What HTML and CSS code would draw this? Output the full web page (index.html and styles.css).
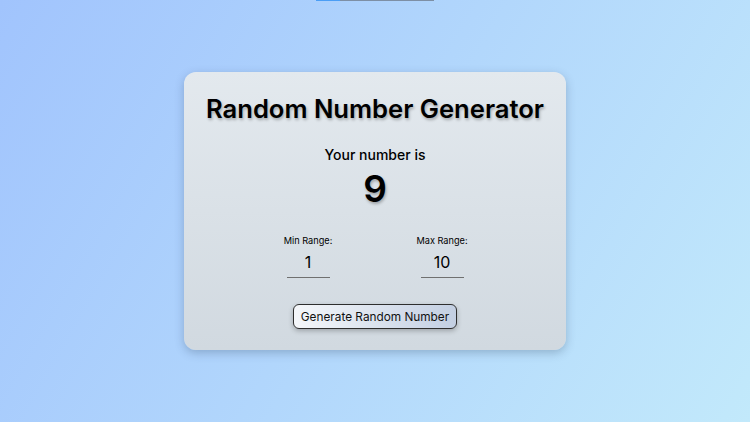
FILE: index.html
```html
<!DOCTYPE html>
<html lang="en">
<head>
<meta charset="utf-8">
<title>Random Number Generator</title>
<link rel="stylesheet" href="styles.css">
</head>
<body>
<div class="topbar"><span class="topbar-fill"></span></div>
<main class="card">
  <h1 class="title">Random Number Generator</h1>
  <p class="subtitle">Your number is</p>
  <p class="result">9</p>
  <div class="ranges">
    <label class="range">
      <span class="range-label">Min Range:</span>
      <input class="range-input" type="text" value="1">
    </label>
    <label class="range">
      <span class="range-label">Max Range:</span>
      <input class="range-input" type="text" value="10">
    </label>
  </div>
  <button class="generate" type="button">Generate Random Number</button>
</main>
</body>
</html>
```

FILE: styles.css
```css
* { box-sizing: border-box; }

html, body { height: 100%; }

body {
  margin: 0;
  background: linear-gradient(120deg, #a1c4fd 0%, #c2e9fb 100%);
  font-family: "Inter", "Noto Sans", sans-serif;
  color: #000;
  display: flex;
  align-items: center;
  justify-content: center;
}

.topbar {
  position: absolute;
  top: 0;
  left: 316px;
  width: 118px;
  height: 1px;
  background: #7d8fa5;
  display: flex;
}

.topbar-fill {
  width: 24px;
  background: #4b9ef5;
}

.card {
  width: 382px;
  padding: 20px 0 21px;
  border-radius: 12px;
  background: linear-gradient(to top, #d1d9e0 0%, #e3e9ee 100%);
  box-shadow: 0 3px 10px rgba(40, 60, 90, 0.28);
  display: flex;
  flex-direction: column;
  align-items: center;
  text-align: center;
}

.title {
  margin: 0;
  font-size: 25.6px;
  line-height: 34px;
  font-weight: 600;
  text-shadow: 1px 2px 3px rgba(0, 0, 0, 0.28);
}

.subtitle {
  margin: 18px 0 0;
  font-size: 14px;
  line-height: 22px;
  font-weight: 500;
}

.result {
  margin: 0;
  font-size: 37px;
  line-height: 46px;
  font-weight: 600;
  text-shadow: 1px 2px 3px rgba(0, 0, 0, 0.28);
}

.ranges {
  margin-top: 22px;
  display: flex;
  justify-content: center;
  gap: 54px;
}

.range {
  width: 80px;
  display: flex;
  flex-direction: column;
  align-items: center;
}

.range-label {
  font-size: 9.2px;
  line-height: 14px;
  font-weight: 400;
}

.range-input {
  width: 43px;
  height: 30px;
  padding: 0 0 2px;
  border: none;
  border-bottom: 1px solid #707070;
  background: transparent;
  font-family: inherit;
  font-size: 16px;
  text-align: center;
  color: #000;
  outline: none;
}

.generate {
  margin-top: 26px;
  width: 164px;
  height: 25px;
  padding: 0;
  border: 1px solid #2e2e2e;
  border-radius: 6px;
  background: linear-gradient(to right, #f5f7fa 0%, #c3cfe2 100%);
  box-shadow: 0 2px 5px rgba(0, 0, 0, 0.25);
  font-family: inherit;
  font-size: 11.8px;
  color: #111;
  cursor: pointer;
}
```
